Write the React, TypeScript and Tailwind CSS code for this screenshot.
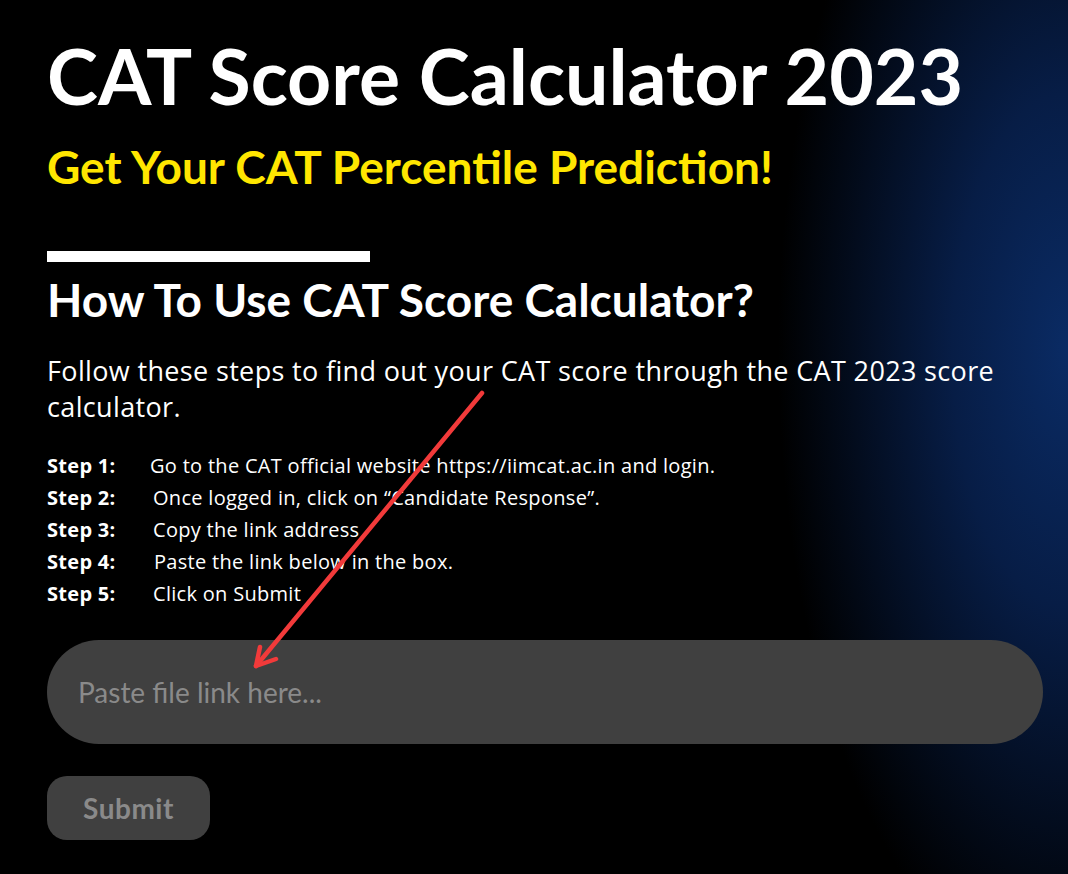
const steps = [
  { label: "Step 1:", text: "Go to the CAT official website https://iimcat.ac.in and login.", pad: "pl-0" },
  { label: "Step 2:", text: "Once logged in, click on \u201cCandidate Response\u201d.", pad: "pl-[3px]" },
  { label: "Step 3:", text: "Copy the link address", pad: "pl-[3px]" },
  { label: "Step 4:", text: "Paste the link below in the box.", pad: "pl-[4px]" },
  { label: "Step 5:", text: "Click on Submit", pad: "pl-[3px]" },
];

const App = () => {
  return (
    <div className="relative h-[874px] w-full overflow-hidden bg-black bg-[radial-gradient(ellipse_290px_640px_at_100%_40%,#0a2b64_0%,#071d46_40%,#000000_100%)] font-['Lato','Open_Sans',sans-serif] text-white">
      <div className="px-[47px] pt-[37px]">
        <h1 className="whitespace-nowrap text-[77px] font-bold leading-[1]">CAT Score Calculator 2023</h1>
        <h2 className="mt-[30px] whitespace-nowrap text-[46px] font-bold leading-[1] text-[#ffe600]">
          Get Your CAT Percentile Prediction!
        </h2>

        <div className="mt-[61px] h-[11px] w-[323px] bg-white" />

        <h3 className="mt-[15px] whitespace-nowrap text-[46px] font-bold leading-[1]">How To Use CAT Score Calculator?</h3>

        <p className="mt-[30px] w-[996px] font-['Open_Sans',sans-serif] text-[27px] leading-[36px] tracking-[0.35px]">
          Follow these steps to find out your CAT score through the CAT 2023 score calculator.
        </p>

        <div className="mt-[25px] flex flex-col font-['Open_Sans',sans-serif] text-[20px] leading-[32px] tracking-[0.3px]">
          {steps.map((s) => (
            <div key={s.label} className="flex whitespace-nowrap">
              <span className="w-[103px] shrink-0 font-bold">{s.label}</span>
              <span className={s.pad}>{s.text}</span>
            </div>
          ))}
        </div>

        <input
          type="text"
          placeholder="Paste file link here..."
          className="mt-[30px] block h-[104px] w-[996px] rounded-full bg-[#404040] px-[31px] text-[28px] text-white outline-none placeholder:text-[#8a8a8a]"
        />

        <button className="mt-[32px] block h-[64px] w-[163px] rounded-[20px] bg-[#404040] text-[28px] font-bold tracking-[0.5px] text-[#8a8a8a]">
          Submit
        </button>
      </div>

      {/* red annotation arrow */}
      <svg className="pointer-events-none absolute left-0 top-0" width="1068" height="874" viewBox="0 0 1068 874">
        <g stroke="#f23a3a" strokeWidth="4.5" strokeLinecap="round" strokeLinejoin="round" fill="none">
          <line x1="482" y1="393" x2="256" y2="666" />
          <path d="M260 647 L256 666 L276 659" />
        </g>
      </svg>
    </div>
  );
};

export default App;
